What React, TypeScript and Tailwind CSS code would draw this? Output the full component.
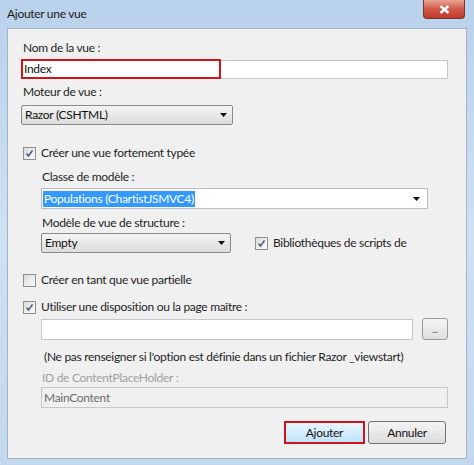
import React from 'react';

const font = { fontFamily: 'Lato, "Noto Sans", sans-serif' };

const Check: React.FC<{ checked?: boolean }> = ({ checked }) => (
  <span className="flex h-[13px] w-[13px] shrink-0 items-center justify-center border border-[#8f8f8f] bg-gradient-to-br from-[#dcdcdc] to-[#fbfbfb]">
    {checked && (
      <svg width="9" height="9" viewBox="0 0 9 9">
        <path d="M1.5 4.5 L3.5 7 L7.5 1.5" fill="none" stroke="#4a5f80" strokeWidth="1.6" />
      </svg>
    )}
  </span>
);

const Arrow: React.FC = () => (
  <svg width="7" height="4" viewBox="0 0 7 4">
    <path d="M0 0 H7 L3.5 4 Z" fill="#111" />
  </svg>
);

const Label: React.FC<{ children: React.ReactNode; className?: string }> = ({ children, className }) => (
  <div className={`h-[16px] whitespace-nowrap text-[12px] leading-[16px] text-[#1e1e1e] ${className ?? ''}`}>{children}</div>
);

const App: React.FC = () => {
  return (
    <div
      style={font}
      className="flex h-[465px] w-[474px] flex-col overflow-hidden bg-gradient-to-b from-[#b9d1ea] via-[#cfe0f3] to-[#c3d7ee] tracking-[-0.3px]"
    >
      {/* title bar */}
      <div className="flex h-[28px] shrink-0 justify-between pl-[7px] pr-[9px]">
        <span className="mt-[6px] text-[12px] leading-[16px] text-[#1a1a1a]">Ajouter une vue</span>
        <div className="flex h-[19px] w-[42px] items-center justify-center rounded-b-[4px] border border-t-0 border-[#7a3328] bg-gradient-to-b from-[#e8a494] via-[#d0594a] to-[#c0392b]">
          <svg width="11" height="9" viewBox="0 0 11 9">
            <path d="M1.5 1 L9.5 8 M9.5 1 L1.5 8" stroke="#fff" strokeWidth="2.4" />
          </svg>
        </div>
      </div>

      {/* client area */}
      <div className="mx-[7px] mb-[6px] flex flex-1 flex-col border border-[#a2b3c8] bg-[#f0f0f0] pl-[13px] pr-[18px] pt-[11px]">
        <Label className="ml-[2px]">Nom de la vue :</Label>
        <div className="relative mt-[4px] h-[19px] border border-[#c5c7cc] bg-white">
          <div className="absolute -left-[1px] -top-[2px] flex h-[20px] w-[200px] items-center border-2 border-[#d0121c] pl-[1px] text-[12px] text-[#111]">
            Index
          </div>
        </div>

        <Label className="mt-[5px] ml-[2px]">Moteur de vue :</Label>
        <div className="mt-[5px] flex h-[20px] w-[212px] items-center justify-between rounded-[2px] border border-[#8a8a8a] bg-gradient-to-b from-[#f4f4f4] to-[#dcdcdc] pl-[3px] pr-[5px] text-[12px] text-[#111]">
          <span>Razor (CSHTML)</span>
          <Arrow />
        </div>

        <div className="mt-[20px] flex h-[16px] items-center gap-[5px] pl-[2px]">
          <Check checked />
          <span className="text-[12px] text-[#1e1e1e]">Créer une vue fortement typée</span>
        </div>

        <div className="pl-[20px]">
          <Label className="mt-[8px] ml-[1px]">Classe de modèle :</Label>
          <div className="mt-[3px] flex h-[21px] w-[387px] items-center justify-between border border-[#b9bcc2] bg-white pl-[1px] pr-[7px]">
            <span className="bg-[#3399ff] px-[1px] text-[12px] leading-[16px] text-white">Populations (ChartistJSMVC4)</span>
            <Arrow />
          </div>

          <Label className="mt-[6px] ml-[1px]">Modèle de vue de structure :</Label>
          <div className="mt-[2px] flex items-center">
            <div className="flex h-[20px] w-[190px] items-center justify-between rounded-[2px] border border-[#8a8a8a] bg-gradient-to-b from-[#f4f4f4] to-[#dcdcdc] pl-[3px] pr-[5px] text-[12px] text-[#111]">
              <span>Empty</span>
              <Arrow />
            </div>
            <div className="ml-[24px] flex items-center gap-[5px]">
              <Check checked />
              <span className="text-[12px] text-[#1e1e1e]">Bibliothèques de scripts de</span>
            </div>
          </div>
        </div>

        <div className="mt-[19px] flex h-[16px] items-center gap-[5px] pl-[2px]">
          <Check />
          <span className="text-[12px] text-[#1e1e1e]">Créer en tant que vue partielle</span>
        </div>
        <div className="mt-[11px] flex h-[16px] items-center gap-[5px] pl-[2px]">
          <Check checked />
          <span className="text-[12px] text-[#1e1e1e]">Utiliser une disposition ou la page maître :</span>
        </div>

        <div className="pl-[20px]">
          <div className="mt-[3px] flex items-center">
            <div className="h-[21px] w-[372px] border border-[#c5c7cc] bg-white" />
            <div className="ml-[9px] flex h-[22px] w-[26px] items-center justify-center rounded-[3px] border border-[#9a9a9a] bg-gradient-to-b from-[#f6f6f6] to-[#dedede] text-[9px] leading-none text-[#444]">
              ...
            </div>
          </div>
          <Label className="mt-[9px] ml-[3px] text-[11.5px]">(Ne pas renseigner si l'option est définie dans un fichier Razor _viewstart)</Label>
          <div className="mt-[5px] ml-[1px] h-[16px] text-[12px] leading-[16px] text-[#a0a0a0]">ID de ContentPlaceHolder :</div>
          <div className="mt-[1px] flex h-[21px] w-[407px] items-center border border-[#c5c7cc] bg-[#f0f0f0] pl-[2px] text-[12px] text-[#6d6d6d]">
            MainContent
          </div>
        </div>

        <div className="mt-[13px] flex justify-end gap-[3px] pr-[2px]">
          <div className="flex h-[23px] w-[81px] items-center justify-center border-2 border-[#d0121c] bg-gradient-to-b from-[#eaf6fd] to-[#bee4f8] text-[12px] text-[#111]">
            Ajouter
          </div>
          <div className="flex h-[23px] w-[78px] items-center justify-center rounded-[3px] border border-[#707070] bg-gradient-to-b from-[#f4f4f4] to-[#dddddd] text-[12px] text-[#111]">
            Annuler
          </div>
        </div>
      </div>
    </div>
  );
};

export default App;
